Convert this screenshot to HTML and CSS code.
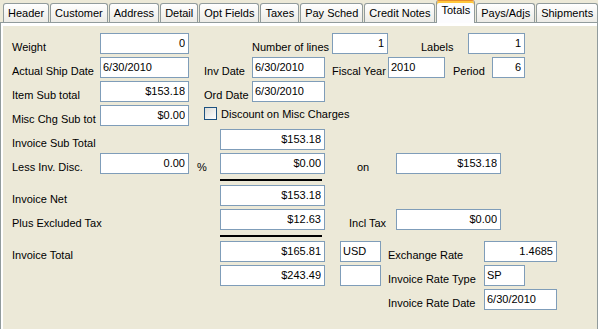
FILE: index.html
```html
<!DOCTYPE html>
<html lang="en">
<head>
    <meta charset="UTF-8">
    <meta name="viewport" content="width=device-width, initial-scale=1.0">
    <title>Invoice Totals</title>
    <link rel="stylesheet" href="styles.css">
</head>
<body>
    <div class="tabs">
        <div class="tab">Header</div>
        <div class="tab">Customer</div>
        <div class="tab">Address</div>
        <div class="tab">Detail</div>
        <div class="tab">Opt Fields</div>
        <div class="tab">Taxes</div>
        <div class="tab">Pay Sched</div>
        <div class="tab">Credit Notes</div>
        <div class="tab active">Totals</div>
        <div class="tab">Pays/Adjs</div>
        <div class="tab">Shipments</div>
    </div>

    <div class="panel">
        <div class="form">
            <div class="row">
                <span class="lbl c-lab">Weight</span>
                <input class="field num c-tb" value="0" readonly>
                <span class="lbl c-lines">Number of lines</span>
                <input class="field num c-c2" value="1" readonly>
                <span class="lbl c-labels">Labels</span>
                <input class="field num c-short" value="1" readonly>
            </div>
            <div class="row">
                <span class="lbl c-lab">Actual Ship Date</span>
                <input class="field c-tb" value="6/30/2010" readonly>
                <span class="lbl c-mid">Inv Date</span>
                <input class="field c-date" value="6/30/2010" readonly>
                <span class="lbl c-c2">Fiscal Year</span>
                <input class="field c-fy" value="2010" readonly>
                <span class="lbl c-per">Period</span>
                <input class="field num c-per-tb" value="6" readonly>
            </div>
            <div class="row">
                <span class="lbl c-lab">Item Sub total</span>
                <input class="field num c-tb" value="$153.18" readonly>
                <span class="lbl c-mid">Ord Date</span>
                <input class="field c-date" value="6/30/2010" readonly>
            </div>
            <div class="row">
                <span class="lbl c-lab">Misc Chg Sub tot</span>
                <input class="field num c-tb" value="$0.00" readonly>
                <label class="check c-check"><span class="box"></span>Discount on Misc Charges</label>
            </div>
            <div class="row">
                <span class="lbl c-lab">Invoice Sub Total</span>
                <input class="field num c-tot" value="$153.18" readonly>
            </div>
            <div class="row">
                <span class="lbl c-lab">Less Inv. Disc.</span>
                <input class="field num c-tb" value="0.00" readonly>
                <span class="lbl c-pct">%</span>
                <input class="field num c-tot" value="$0.00" readonly>
                <span class="lbl c-on">on</span>
                <input class="field num c-on-tb" value="$153.18" readonly>
            </div>
            <div class="rule"></div>
            <div class="row">
                <span class="lbl c-lab">Invoice Net</span>
                <input class="field num c-tot" value="$153.18" readonly>
            </div>
            <div class="row">
                <span class="lbl c-lab">Plus Excluded Tax</span>
                <input class="field num c-tot" value="$12.63" readonly>
                <span class="lbl c-incl">Incl Tax</span>
                <input class="field num c-on-tb" value="$0.00" readonly>
            </div>
            <div class="rule"></div>
            <div class="row">
                <span class="lbl c-lab">Invoice Total</span>
                <input class="field num c-tot" value="$165.81" readonly>
                <input class="field c-cur" value="USD" readonly>
                <span class="lbl c-rate-lbl">Exchange Rate</span>
                <input class="field num c-rate" value="1.4685" readonly>
            </div>
            <div class="row">
                <input class="field num c-tot" value="$243.49" readonly>
                <input class="field c-cur" value="" readonly>
                <span class="lbl c-rate-lbl">Invoice Rate Type</span>
                <input class="field c-rate-short" value="SP" readonly>
            </div>
            <div class="row">
                <span class="lbl c-rate-lbl">Invoice Rate Date</span>
                <input class="field c-rate" value="6/30/2010" readonly>
            </div>
        </div>
    </div>
</body>
</html>
```

FILE: styles.css
```css
body {
    margin: 0;
    width: 598px;
    height: 329px;
    overflow: hidden;
    background-color: #ECE9D8;
    font-family: "Liberation Sans", Arial, sans-serif;
    font-size: 11px;
    color: #000;
}
.tabs {
    display: flex;
    align-items: flex-end;
    gap: 1px;
    height: 22px;
    padding-left: 3px;
}
.tab {
    height: 19px;
    box-sizing: border-box;
    padding: 0 4px;
    line-height: 18px;
    border: 1px solid #919B9C;
    border-bottom: none;
    border-radius: 3px 3px 0 0;
    background: linear-gradient(#FFFFFF, #ECEBE6);
    white-space: nowrap;
}
.tab.active {
    position: relative;
    height: 23px;
    margin-bottom: -1px;
    padding-top: 2px;
    line-height: 15px;
    border-top-color: #E68B2C;
    box-shadow: inset 0 2px 0 #FFC73C;
    background: #FCFCFE;
}
.panel {
    height: 296px;
    border: 1px solid #919B9C;
    border-bottom: none;
    box-shadow: inset 2px 3px 0 #FFFFFF;
    padding: 10px 0 0 11px;
}
.form {
    display: flex;
    flex-direction: column;
    gap: 3px;
}
/* column lines sit at the x positions of the dialog controls */
.row {
    display: grid;
    grid-template-columns:
        [lab] 88px [tb] 89px [tbx] 8px [pct] 7px [mid] 16px [tot] 32px
        [date] 73px [totx] 7px [c2] 8px [cur] 9px [incl] 8px [on] 24px
        [curx] 7px [c3] 8px [ontb] 25px [lbls] 24px [fyx] 8px [per] 15px
        [lbltb] 16px [rate] 8px [pertb] 9px [onx] 24px [shortx] 32px [ratex];
    height: 21px;
}
.rule {
    width: 102px;
    height: 2px;
    margin: 2px 0 1px 208px;
    background-color: #000;
}
.lbl {
    align-self: end;
    line-height: 13px;
    white-space: nowrap;
}
.field {
    width: 100%;
    height: 21px;
    box-sizing: border-box;
    margin: 0;
    padding: 0 3px 1px 2px;
    border: 1px solid #7F9DB9;
    border-radius: 0;
    background-color: #fff;
    font-family: "Liberation Sans", Arial, sans-serif;
    font-size: 11px;
    color: #000;
    outline: none;
}
.num {
    text-align: right;
}
.check {
    display: flex;
    align-items: center;
    gap: 4px;
    align-self: start;
    margin-top: 2px;
    white-space: nowrap;
}
.box {
    width: 13px;
    height: 13px;
    box-sizing: border-box;
    border: 1px solid #1C5180;
    background: linear-gradient(135deg, #DCDCD7, #FFFFFF);
}

.c-lab { grid-column: lab / tb; }
.c-tb { grid-column: tb / tbx; }
.c-pct { grid-column: pct / mid; }
.c-mid { grid-column: mid / date; }
.c-check { grid-column: mid / onx; }
.c-date { grid-column: date / totx; }
.c-tot { grid-column: tot / totx; }
.c-lines { grid-column: date / c2; }
.c-c2 { grid-column: c2 / c3; }
.c-fy { grid-column: c3 / fyx; }
.c-labels { grid-column: lbls / lbltb; }
.c-short { grid-column: lbltb / shortx; }
.c-per { grid-column: per / pertb; }
.c-per-tb { grid-column: pertb / shortx; }
.c-on { grid-column: on / ontb; }
.c-incl { grid-column: incl / ontb; }
.c-on-tb { grid-column: ontb / onx; }
.c-cur { grid-column: cur / curx; }
.c-rate-lbl { grid-column: c3 / rate; }
.c-rate { grid-column: rate / ratex; }
.c-rate-short { grid-column: rate / shortx; }
```
